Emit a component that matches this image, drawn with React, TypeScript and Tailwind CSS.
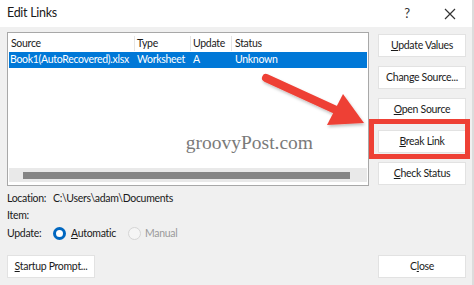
import React from "react";

const Btn = ({
  children,
  className = "",
}: {
  children: React.ReactNode;
  className?: string;
}) => (
  <button
    className={`h-[23px] w-full bg-white border border-[#e2e2e2] text-[10.5px] tracking-[-0.3px] text-[#1a1a1a] flex items-center justify-center whitespace-nowrap ${className}`}
  >
    {children}
  </button>
);

export default function App() {
  return (
    <div
      className="relative w-[474px] h-[285px] bg-[#f0f0f0] overflow-hidden flex flex-col border-r-2 border-[#dcdcdc]"
      style={{ fontFamily: 'Lato, "Noto Sans", sans-serif' }}
    >
      {/* title bar */}
      <div className="h-[27px] bg-white flex items-center pl-[7px] pr-[16px] shrink-0">
        <span className="text-[12.5px] tracking-[-0.3px] text-[#1a1a1a] flex-1">Edit Links</span>
        <span className="text-[13px] text-[#333] mr-[34px]">?</span>
        <svg width="12" height="12" viewBox="0 0 12 12" className="text-[#333]">
          <path d="M1 1L11 11M11 1L1 11" stroke="currentColor" strokeWidth="1.2" />
        </svg>
      </div>

      <div className="flex pl-[7px] pr-[6px] pt-[5px] gap-[9px]">
        {/* list */}
        <div className="w-[362px] h-[154px] bg-white border border-[#a8a8a8] flex flex-col pt-[2px] pl-[1px] pr-[1px]">
          <div className="flex h-[17px] items-center text-[10.5px] tracking-[-0.3px] text-[#1a1a1a] whitespace-nowrap">
            <div className="w-[126px] pl-[2px] border-r border-[#e5e5e5]">Source</div>
            <div className="w-[56px] pl-[2px] border-r border-[#e5e5e5]">Type</div>
            <div className="w-[41px] pl-[2px] border-r border-[#e5e5e5]">Update</div>
            <div className="pl-[3px]">Status</div>
          </div>
          <div className="flex h-[16px] items-center text-[10.5px] tracking-[-0.3px] text-white bg-[#0078d7] whitespace-nowrap">
            <div className="w-[126px] pl-[1px]">Book1(AutoRecovered).xlsx</div>
            <div className="w-[56px] pl-[2px]">Worksheet</div>
            <div className="w-[41px] pl-[2px]">A</div>
            <div className="pl-[3px]">Unknown</div>
          </div>
          <div className="flex-1 flex items-center justify-end pr-[54px] pt-[50px]">
            <span
              className="text-[19.5px] text-[#7a7a7a]"
              style={{ fontFamily: '"Liberation Serif", serif' }}
            >
              groovyPost.com
            </span>
          </div>
          <div className="h-[14px] bg-[#e9e9e9] flex items-center pl-[14px] pr-[17px] mb-[3px]">
            <div className="h-[7px] flex-1 bg-[#858585]" />
          </div>
        </div>

        {/* buttons */}
        <div className="relative w-[88px] flex flex-col gap-[9px] pt-[2px]">
          <Btn>
            <span><u>U</u>pdate Values</span>
          </Btn>
          <Btn>
            <span>Chan<u>g</u>e Source...</span>
          </Btn>
          <Btn>
            <span><u>O</u>pen Source</span>
          </Btn>
          <Btn>
            <span><u>B</u>reak Link</span>
          </Btn>
          <Btn className="border-[#5fa3e0]">
            <span><u>C</u>heck Status</span>
          </Btn>
          <div className="absolute left-[-9px] top-[87px] w-[101px] h-[40px] border-[5px] border-[#ee4035]" />
        </div>
      </div>

      {/* details */}
      <div className="flex flex-col pl-[7px] pt-[4px] text-[10.5px] tracking-[-0.3px] text-[#1a1a1a] whitespace-nowrap">
        <div className="flex h-[17px] items-center">
          <span className="w-[46px]">Location:</span>
          <span>C:\Users\adam\Documents</span>
        </div>
        <div className="flex h-[17px] items-center">
          <span className="w-[46px]">Item:</span>
        </div>
        <div className="flex h-[19px] items-center">
          <span className="w-[46px]">Update:</span>
          <span className="w-[13px] h-[13px] rounded-full border-[3.5px] border-[#0067c0] bg-white mr-[5px]" />
          <span className="w-[57px]"><u>A</u>utomatic</span>
          <span className="w-[13px] h-[13px] rounded-full border border-[#d5d5d5] bg-[#f5f5f5] mr-[4px]" />
          <span className="text-[#9a9a9a]">Manual</span>
        </div>
      </div>

      <div className="flex justify-between pl-[7px] pr-[6px] mt-auto mb-[7px]">
        <div className="w-[88px]">
          <Btn>
            <span><u>S</u>tartup Prompt...</span>
          </Btn>
        </div>
        <div className="w-[88px]">
          <Btn>
            <span>C<u>l</u>ose</span>
          </Btn>
        </div>
      </div>

      {/* arrow callout */}
      <svg
        className="absolute left-0 top-0 pointer-events-none"
        width="474"
        height="285"
        viewBox="0 0 474 285"
      >
        <defs>
          <filter id="sh" x="-20%" y="-20%" width="140%" height="140%">
            <feDropShadow dx="1" dy="2" stdDeviation="1.5" floodColor="#000" floodOpacity="0.25" />
          </filter>
        </defs>
        <g filter="url(#sh)" fill="#ee4035">
          <line x1="266" y1="78" x2="336" y2="110" stroke="#ee4035" strokeWidth="8" strokeLinecap="round" />
          <polygon points="343,94 364,123 327,125" />
        </g>
      </svg>
    </div>
  );
}
